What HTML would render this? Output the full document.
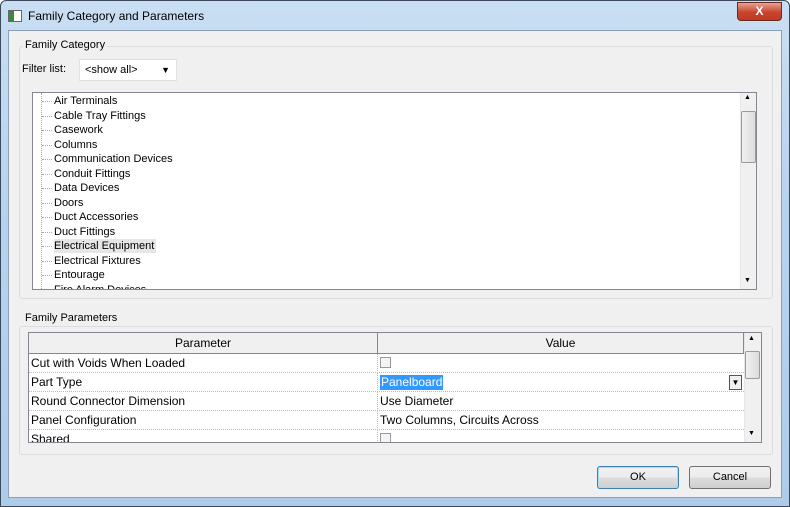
<!DOCTYPE html>
<html><head><meta charset="utf-8"><style>
*{box-sizing:border-box;margin:0;padding:0}
body{width:790px;height:507px;overflow:hidden;font-family:"Liberation Sans",sans-serif;font-size:11px;color:#000;background:#fff;position:relative}
.frame{position:absolute;left:0;top:0;width:790px;height:507px;background:linear-gradient(180deg,#c9def2 0%,#b8d3ee 40%,#aecbe9 100%);border:1px solid #3a4a5c;border-radius:6px 6px 0 0}
.title{position:absolute;left:28px;top:9px;font-size:12px;color:#000}
.icon{position:absolute;left:8px;top:10px;width:14px;height:12px;border:1px solid #667;background:linear-gradient(90deg,#3a8a3a 0 40%,#fff 40%)}
.close{position:absolute;left:737px;top:2px;width:45px;height:19px;border-radius:0 0 4px 4px;background:linear-gradient(180deg,#e8a294,#c8442c 55%,#c03a22);border:1px solid #6b2a20;color:#fff;font-weight:bold;text-align:center;font-size:12px;line-height:17px}
.client{position:absolute;left:8px;top:30px;width:774px;height:468px;background:#f0f0f0;border:1px solid #8aa0b8}
.grp{position:absolute;border:1px solid #dcdcdc;border-radius:3px}
.lbl{position:absolute;background:#f0f0f0;padding:0 2px}
.abs{position:absolute}
.tree{position:absolute;left:23px;top:61px;width:725px;height:198px;background:#fff;border:1px solid #828790;overflow:hidden}
.item{position:absolute;left:21px;height:14px;line-height:14px}
.item::before{content:"";position:absolute;left:-12px;top:7px;width:10px;border-top:1px dotted #aaa}
.vs{position:absolute;background:#f0f0f0;border-left:1px solid #e6e6e6}
.thumb{position:absolute;background:linear-gradient(90deg,#f0f0f0,#dcdcdc);border:1px solid #9a9a9a;border-radius:2px}
.tbl{position:absolute;left:19px;top:301px;width:734px;height:111px;background:#fff;border:1px solid #828790;overflow:hidden}
.hd{position:absolute;top:0;height:21px;line-height:20px;text-align:center;background:#f0f0f0;border-right:1px solid #888;border-bottom:1px solid #888;font-size:12px}
.row{position:absolute;left:0;width:715px;height:19px;border-bottom:1px dotted #bbb;font-size:12px;line-height:19px}
.row span{position:absolute;left:2px}
.row .v{left:351px}
.row .div{position:absolute;left:348px;top:0;height:19px;border-left:1px dotted #bbb}
.cb{position:absolute;left:351px;top:3px;width:11px;height:11px;border:1px solid #999;background:#f4f4f4}
.btn{position:absolute;top:435px;width:82px;height:23px;border:1px solid #707070;border-radius:3px;background:linear-gradient(180deg,#f2f2f2,#ebebeb 50%,#dddddd 51%,#cfcfcf);text-align:center;line-height:21px}
</style></head><body>
<div class="frame"></div>
<div class="icon"></div>
<div class="title">Family Category and Parameters</div>
<div class="close">X</div>
<div class="client">
  <div class="grp" style="left:10px;top:15px;width:754px;height:253px"></div>
  <div class="lbl" style="left:14px;top:8px">Family Category</div>
  <div class="abs" style="left:13px;top:32px">Filter list:</div>
  <div class="abs" style="left:70px;top:28px;width:98px;height:22px;background:#fff;border:1px solid #e0e0e0;line-height:20px;padding-left:5px">&lt;show all&gt;<span style="position:absolute;right:6px;top:0;font-size:9px">&#9660;</span></div>
  <div class="tree">
    <div class="abs" style="left:8px;top:0;height:198px;border-left:1px dotted #aaa"></div>
    <div class="item" style="top:1px">Air Terminals</div>
    <div class="item" style="top:15.5px">Cable Tray Fittings</div>
    <div class="item" style="top:30px">Casework</div>
    <div class="item" style="top:44.5px">Columns</div>
    <div class="item" style="top:59px">Communication Devices</div>
    <div class="item" style="top:73.5px">Conduit Fittings</div>
    <div class="item" style="top:88px">Data Devices</div>
    <div class="item" style="top:102.5px">Doors</div>
    <div class="item" style="top:117px">Duct Accessories</div>
    <div class="item" style="top:131.5px">Duct Fittings</div>
    <div class="item" style="top:146px;background:#e6e6e6;padding-right:2px">Electrical Equipment</div>
    <div class="item" style="top:160.5px">Electrical Fixtures</div>
    <div class="item" style="top:175px">Entourage</div>
    <div class="item" style="top:189.5px">Fire Alarm Devices</div>
    <div class="vs" style="left:707px;top:0;width:17px;height:198px"></div>
    <div class="abs" style="left:711px;top:1px;font-size:7px">&#9650;</div>
    <div class="abs" style="left:711px;top:184px;font-size:7px">&#9660;</div>
    <div class="thumb" style="left:708px;top:18px;width:15px;height:52px"></div>
  </div>
  <div class="grp" style="left:10px;top:295px;width:754px;height:129px"></div>
  <div class="lbl" style="left:14px;top:281px">Family Parameters</div>
  <div class="tbl">
    <div class="hd" style="left:0;width:349px">Parameter</div>
    <div class="hd" style="left:349px;width:366px">Value</div>
    <div class="row" style="top:21px"><div class="div"></div><span>Cut with Voids When Loaded</span><div class="cb"></div></div>
    <div class="row" style="top:40px"><div class="div"></div><span>Part Type</span><span class="v" style="background:#3399ff;color:#fff;top:2px;line-height:15px;padding:0 1px">Panelboard</span><div class="abs" style="left:700px;top:2px;width:13px;height:15px;border:1px solid #555;background:#f0f0f0;font-size:8px;text-align:center;line-height:13px">&#9660;</div></div>
    <div class="row" style="top:59px"><div class="div"></div><span>Round Connector Dimension</span><span class="v">Use Diameter</span></div>
    <div class="row" style="top:78px"><div class="div"></div><span>Panel Configuration</span><span class="v">Two Columns, Circuits Across</span></div>
    <div class="row" style="top:97px"><div class="div"></div><span>Shared</span><div class="cb"></div></div>
    <div class="vs" style="left:715px;top:0;width:18px;height:111px"></div>
    <div class="abs" style="left:719px;top:2px;font-size:7px">&#9650;</div>
    <div class="abs" style="left:719px;top:97px;font-size:7px">&#9660;</div>
    <div class="thumb" style="left:716px;top:18px;width:15px;height:28px"></div>
  </div>
  <div class="btn" style="left:588px;border-color:#3c7fb1;box-shadow:inset 0 0 0 1px #a6dcf4">OK</div>
  <div class="btn" style="left:680px">Cancel</div>
</div>
</body></html>
